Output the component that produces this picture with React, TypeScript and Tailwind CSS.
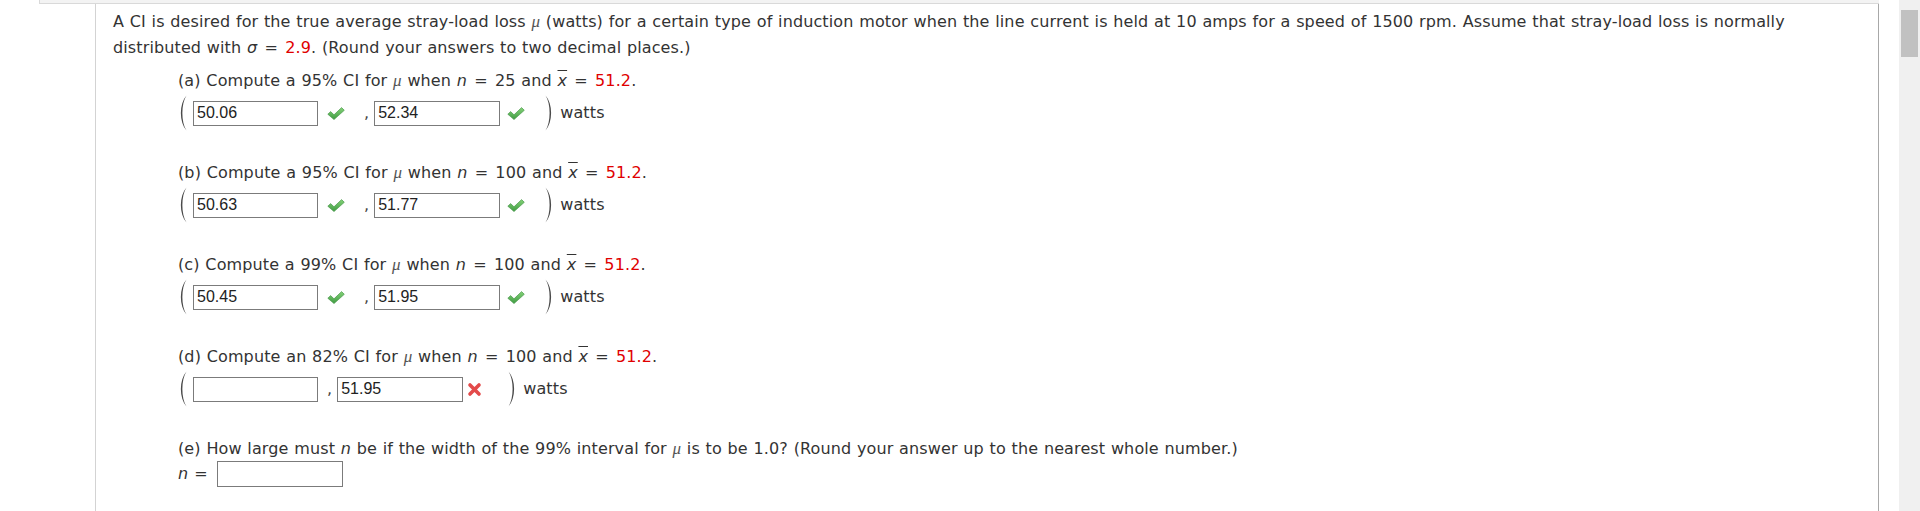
import React from "react";

type Mark = "ok" | "bad" | null;

const Check = () => (
  <svg width="18" height="13" viewBox="0 0 18 13">
    <defs>
      <linearGradient id="chkg" x1="0" y1="0" x2="0" y2="1">
        <stop offset="0" stopColor="#84d277" />
        <stop offset="1" stopColor="#3f9b42" />
      </linearGradient>
    </defs>
    <path
      d="M0.8 7.2 L3.6 4.6 L7 7.8 L14.6 0.6 L17.3 3.3 L7 12.6 Z"
      fill="url(#chkg)"
      stroke="#3c8f3f"
      strokeWidth="0.6"
      strokeLinejoin="round"
    />
  </svg>
);

const Cross = () => (
  <svg width="15" height="15" viewBox="0 0 15 15">
    <path d="M3 3 L12 12 M12 3 L3 12" stroke="#e34a4a" strokeWidth="3.6" strokeLinecap="round" />
  </svg>
);

const LParen = () => (
  <svg width="9" height="36" viewBox="0 0 9 36">
    <path d="M8.5 0.5 C1 9 1 27 8.5 35.5 C3 27 3 9 8.5 0.5 Z" fill="#4a4a4a" />
  </svg>
);

const RParen = () => (
  <svg width="9" height="36" viewBox="0 0 9 36">
    <path d="M0.5 0.5 C8 9 8 27 0.5 35.5 C6 27 6 9 0.5 0.5 Z" fill="#4a4a4a" />
  </svg>
);

const Box = ({ value, w }: { value: string; w: string }) => (
  <input
    readOnly
    value={value}
    className={`${w} h-[25px] border border-[#7b7b7b] bg-white px-[3px] font-['Liberation_Sans',Arial,sans-serif] text-[16px] leading-[23px] tracking-normal text-[#222] outline-none`}
  />
);

const Slot = ({ mark, padClass }: { mark: Mark; padClass: string }) => {
  if (!mark) return null;
  return (
    <span className={`flex w-[37px] items-center ${padClass}`}>
      {mark === "ok" ? <Check /> : <Cross />}
    </span>
  );
};

const Row = ({ a, b, ma, mb }: { a: string; b: string; ma: Mark; mb: Mark }) => (
  <div className="flex h-[38px] items-center">
    <LParen />
    <span className="ml-[6px] flex">
      <Box value={a} w="w-[125px]" />
    </span>
    <Slot mark={ma} padClass="pl-[9px]" />
    <span className="ml-[9px] text-[#444]">,</span>
    <span className="ml-[5px] flex">
      <Box value={b} w="w-[126px]" />
    </span>
    <Slot mark={mb} padClass={mb === "ok" ? "pl-[7px]" : "pl-[4px]"} />
    <span className="ml-[8px] flex">
      <RParen />
    </span>
    <span className="ml-[6px]">watts</span>
  </div>
);

const N = () => <span className="italic">n</span>;
const Mu = () => <span className="font-['Liberation_Serif',serif] text-[17px] italic text-[#555]">μ</span>;
const XBar = () => <span className="italic overline">x</span>;
const Eq = () => <span className="px-[1.5px]">=</span>;
const Red = ({ children }: { children: React.ReactNode }) => <span className="text-[#e00000]">{children}</span>;

const Label = ({ children, cls }: { children: React.ReactNode; cls?: string }) => (
  <div className={`whitespace-nowrap ${cls ?? "h-[26px] leading-[26px]"}`}>{children}</div>
);

export default function App() {
  return (
    <div className="flex h-[511px] w-[1920px] overflow-hidden bg-white font-['DejaVu_Sans',Verdana,sans-serif] text-[16px] tracking-[0.12px] [word-spacing:0.5px] text-[#333]">
      <div className="flex w-[1899px] flex-col">
        <div className="ml-[39px] h-[4px] w-[1840px] border-b border-l border-[#d9d9d9] bg-[#f3f3f3]" />
        <div className="ml-[95px] w-[1784px] flex-1 border-l border-r border-l-[#d3d3d3] border-r-[#a8a8a8] pl-[17px] pt-[5px]">
          <div className="whitespace-nowrap leading-[26px]">
            A CI is desired for the true average stray-load loss <Mu /> (watts) for a certain type of induction motor when the line current is held at 10 amps for a speed of 1500 rpm. Assume that stray-load loss is normally
            <br />
            distributed with <span className="italic">σ</span> <Eq /> <Red>2.9</Red>. (Round your answers to two decimal places.)
          </div>
          <div className="ml-[65px]">
            <div className="mt-[7px]">
              <Label>
                (a) Compute a 95% CI for <Mu /> when <N /> <Eq /> 25 and <XBar /> <Eq /> <Red>51.2</Red>.
              </Label>
              <Row a="50.06" b="52.34" ma="ok" mb="ok" />
            </div>
            <div className="mt-[28px]">
              <Label>
                (b) Compute a 95% CI for <Mu /> when <N /> <Eq /> 100 and <XBar /> <Eq /> <Red>51.2</Red>.
              </Label>
              <Row a="50.63" b="51.77" ma="ok" mb="ok" />
            </div>
            <div className="mt-[28px]">
              <Label>
                (c) Compute a 99% CI for <Mu /> when <N /> <Eq /> 100 and <XBar /> <Eq /> <Red>51.2</Red>.
              </Label>
              <Row a="50.45" b="51.95" ma="ok" mb="ok" />
            </div>
            <div className="mt-[28px]">
              <Label>
                (d) Compute an 82% CI for <Mu /> when <N /> <Eq /> 100 and <XBar /> <Eq /> <Red>51.2</Red>.
              </Label>
              <Row a="" b="51.95" ma={null} mb="bad" />
            </div>
            <div className="mt-[29px]">
              <Label cls="h-[24px] leading-[24px]">
                (e) How large must <N /> be if the width of the 99% interval for <Mu /> is to be 1.0? (Round your answer up to the nearest whole number.)
              </Label>
              <div className="flex h-[26px] items-center">
                <N />
                <span className="ml-[6px]">=</span>
                <span className="ml-[9px] flex">
                  <input
                    readOnly
                    value=""
                    className="h-[26px] w-[126px] border border-[#7b7b7b] bg-white px-[3px] font-['Liberation_Sans',Arial,sans-serif] text-[16px] tracking-normal text-[#222] outline-none"
                  />
                </span>
              </div>
            </div>
          </div>
        </div>
      </div>
      <div className="flex w-[21px] flex-col bg-[#f0f0f0] pt-[10px]">
        <div className="mx-[2px] h-[47px] bg-[#c1c1c1]" />
      </div>
    </div>
  );
}
